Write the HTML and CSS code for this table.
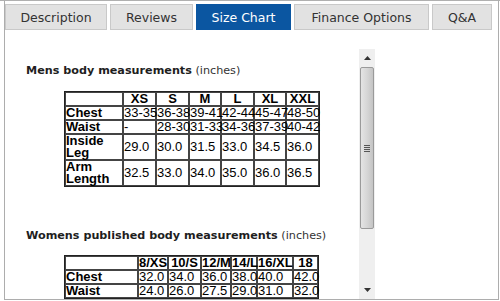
FILE: index.html
```html
<!DOCTYPE html>
<html>
<head>
<meta charset="utf-8">
<link rel="stylesheet" href="styles.css">
</head>
<body>
<div class="frame">
  <ul class="tabs">
    <li class="tab t-desc">Description</li>
    <li class="tab t-rev">Reviews</li>
    <li class="tab t-size active">Size Chart</li>
    <li class="tab t-fin">Finance Options</li>
    <li class="tab t-qa">Q&amp;A</li>
  </ul>
  <div class="panel">
    <div class="scrollbox">
      <div class="content">
        <h3 class="heading"><b>Mens body measurements</b> (inches)</h3>
        <table class="chart mens">
          <colgroup>
            <col class="c-label-m"><col class="c33"><col class="c33"><col class="c32"><col class="c33"><col class="c32"><col class="c33">
          </colgroup>
          <tr class="hdr"><th></th><th>XS</th><th>S</th><th>M</th><th>L</th><th>XL</th><th>XXL</th></tr>
          <tr><th class="lbl">Chest</th><td>33-35</td><td>36-38</td><td>39-41</td><td>42-44</td><td>45-47</td><td>48-50</td></tr>
          <tr><th class="lbl">Waist</th><td>-</td><td>28-30</td><td>31-33</td><td>34-36</td><td>37-39</td><td>40-42</td></tr>
          <tr><th class="lbl">Inside Leg</th><td>29.0</td><td>30.0</td><td>31.5</td><td>33.0</td><td>34.5</td><td>36.0</td></tr>
          <tr><th class="lbl">Arm Length</th><td>32.5</td><td>33.0</td><td>34.0</td><td>35.0</td><td>36.0</td><td>36.5</td></tr>
        </table>
        <h3 class="heading second"><b>Womens published body measurements</b> (inches)</h3>
        <table class="chart womens">
          <colgroup>
            <col class="c-label-w"><col class="w30"><col class="w33"><col class="w30"><col class="w26"><col class="w36"><col class="w25">
          </colgroup>
          <tr class="hdr"><th></th><th>8/XS</th><th>10/S</th><th>12/M</th><th>14/L</th><th>16/XL</th><th>18</th></tr>
          <tr><th class="lbl">Chest</th><td>32.0</td><td>34.0</td><td>36.0</td><td>38.0</td><td>40.0</td><td>42.0</td></tr>
          <tr><th class="lbl">Waist</th><td>24.0</td><td>26.0</td><td>27.5</td><td>29.0</td><td>31.0</td><td>32.0</td></tr>
        </table>
      </div>
      <div class="scrollbar">
        <div class="sb-btn">
          <svg width="7" height="4" viewBox="0 0 7 4"><path d="M0 4 L3.5 0 L7 4 Z" fill="#333"/></svg>
        </div>
        <div class="sb-thumb">
          <span class="grip"></span>
        </div>
        <div class="sb-track"></div>
        <div class="sb-btn">
          <svg width="7" height="4" viewBox="0 0 7 4"><path d="M0 0 L3.5 4 L7 0 Z" fill="#333"/></svg>
        </div>
      </div>
    </div>
  </div>
</div>
</body>
</html>
```
FILE: styles.css
```css
html, body {
  margin: 0;
  padding: 0;
  background: #ffffff;
}

body {
  border-top: 1px solid #b0b0b0;
}

.frame {
  box-sizing: border-box;
  margin-left: 4px;
  width: 495px;
  height: 299px;
  border: 1px solid #adadad;
  border-top: 0;
  overflow: hidden;
  background: #ffffff;
  display: flex;
  flex-direction: column;
}

.tabs {
  list-style: none;
  margin: 0;
  padding: 3px 0 0 0;
  display: flex;
  gap: 3px;
  flex: none;
}

.tab {
  box-sizing: border-box;
  height: 26px;
  background: #e2e2e2;
  border: 1px solid #c9c9c9;
  color: #333333;
  font-family: "DejaVu Sans", sans-serif;
  font-size: 12.5px;
  display: flex;
  align-items: center;
  justify-content: center;
}

.t-desc { width: 102px; }
.t-rev { width: 83px; }
.t-size { width: 95px; }
.t-fin { width: 135px; }
.t-qa { width: 60px; }

.tab.active {
  background: #0b56a1;
  border-color: #0b56a1;
  color: #ffffff;
}

.panel {
  flex: 1;
  min-height: 0;
  padding: 19px 0 0 16px;
}

.scrollbox {
  width: 354px;
  height: 100%;
  display: flex;
}

.content {
  flex: 1;
  overflow: hidden;
  padding: 15px 0 0 5px;
  color: #222222;
}

.heading {
  margin: 0;
  font-family: "DejaVu Sans", sans-serif;
  font-size: 11.2px;
  line-height: 14px;
  font-weight: normal;
  color: #333333;
  white-space: nowrap;
}

.heading b {
  font-weight: bold;
  color: #1e1e1e;
}

.heading.second {
  margin-top: 42px;
}

.chart {
  margin: 13px 0 0 38px;
  border-collapse: separate;
  border-spacing: 0;
  table-layout: fixed;
  font-family: "Liberation Sans", Arial, sans-serif;
  font-size: 13px;
  line-height: 12px;
  color: #000000;
  border: 1px solid #222222;
}

.mens { width: 254px; }
.womens { width: 253px; margin-top: 12px; }

.chart th, .chart td {
  border: 1px solid #444444;
  padding: 0;
  vertical-align: middle;
  white-space: nowrap;
  overflow: visible;
}

.chart td {
  text-align: left;
}

.chart th {
  font-weight: bold;
  text-align: center;
}

.chart th.lbl {
  text-align: left;
  white-space: normal;
}

.c-label-m { width: 58px; }
.c33 { width: 33px; }
.c32 { width: 32px; }

.c-label-w { width: 73px; }
.w30 { width: 30px; }
.w33 { width: 33px; }
.w26 { width: 26px; }
.w36 { width: 36px; }
.w25 { width: 25px; }

.scrollbar {
  flex: none;
  width: 16px;
  background: #efefef;
  display: flex;
  flex-direction: column;
}

.sb-btn {
  flex: none;
  height: 18px;
  display: flex;
  align-items: center;
  justify-content: center;
}

.sb-thumb {
  flex: none;
  box-sizing: border-box;
  height: 162px;
  margin: 0 1px;
  border: 1px solid #9a9a9a;
  border-radius: 2px;
  background: linear-gradient(to right, #e4e4e4, #d6d6d6 50%, #c4c4c4);
  display: flex;
  align-items: center;
  justify-content: center;
}

.grip {
  width: 6px;
  height: 7px;
  background: repeating-linear-gradient(to bottom, #555555 0, #555555 1px, transparent 1px, transparent 2px);
}

.sb-track {
  flex: 1;
}
```
